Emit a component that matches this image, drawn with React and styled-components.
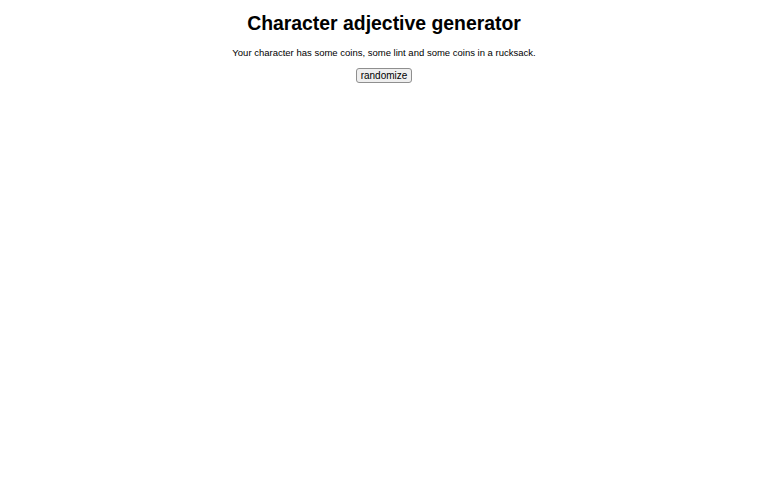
import React, { useState } from "react";
import styled, { createGlobalStyle } from "styled-components";

const GlobalStyle = createGlobalStyle`
  html, body {
    margin: 0;
    background: #fff;
  }
  body {
    font-family: "Liberation Sans", Arial, sans-serif;
    color: #000;
  }
`;

const Page = styled.main`
  display: flex;
  flex-direction: column;
  align-items: center;
  padding-top: 12px;
`;

const Title = styled.h1`
  margin: 0;
  font-size: 19.4px;
  font-weight: bold;
  line-height: 22px;
`;

const Sentence = styled.p`
  margin: 13px 0 0;
  font-size: 9.5px;
  line-height: 12px;
`;

const Button = styled.button`
  margin-top: 9px;
  font-family: "Liberation Sans", Arial, sans-serif;
  font-size: 10px;
  padding: 1px 4px;
  background: #efefef;
  border: 1px solid #8f8f8f;
  border-radius: 3px;
  color: #000;
`;

const items = ["some coins", "some lint", "a pebble", "a bent spoon", "a feather"];
const pick = () => items[Math.floor(Math.random() * items.length)];

export default function App() {
  const [loot, setLoot] = useState(["some coins", "some lint", "some coins"]);

  return (
    <>
      <GlobalStyle />
      <Page>
        <Title>Character adjective generator</Title>
        <Sentence>
          Your character has {loot[0]}, {loot[1]} and {loot[2]} in a rucksack.
        </Sentence>
        <Button onClick={() => setLoot([pick(), pick(), pick()])}>randomize</Button>
      </Page>
    </>
  );
}
